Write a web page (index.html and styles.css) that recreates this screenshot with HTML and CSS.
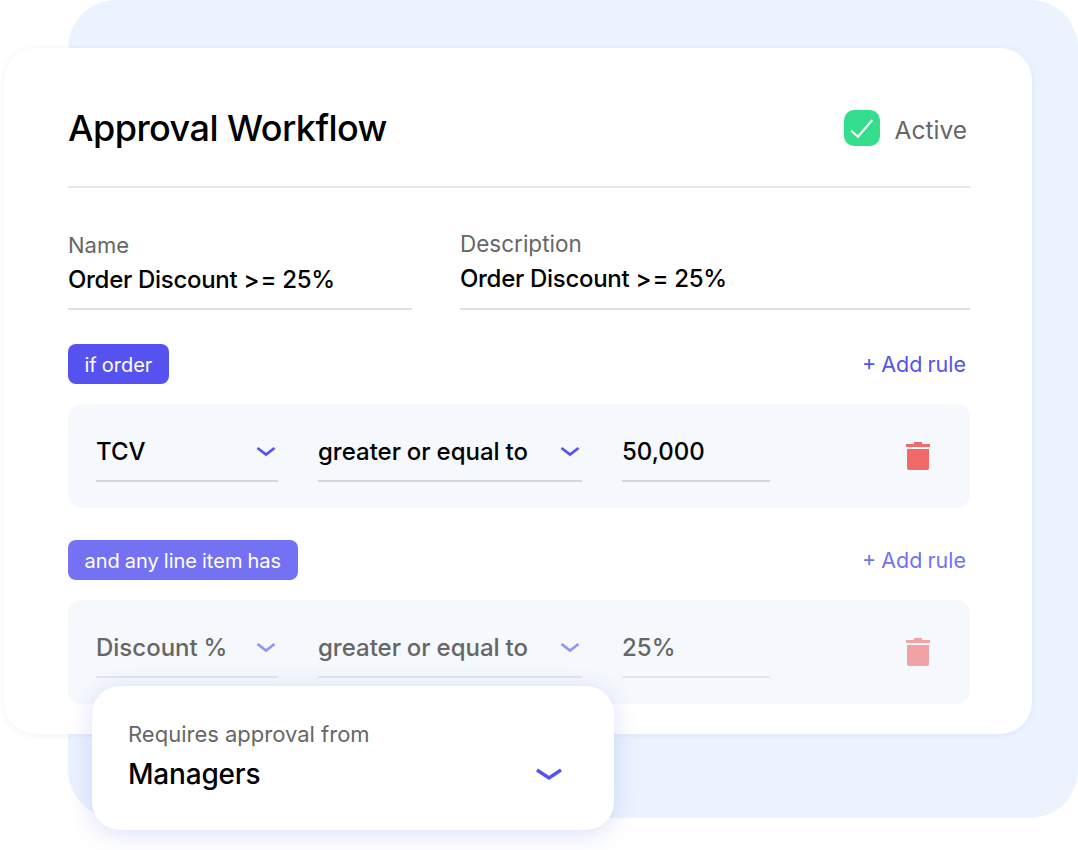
FILE: index.html
```html
<!DOCTYPE html>
<html lang="en">
<head>
<meta charset="utf-8">
<title>Approval Workflow</title>
<link rel="stylesheet" href="styles.css">
</head>
<body>
<div class="scene">
  <div class="backdrop"></div>
  <main class="card">
    <header class="head">
      <h1 class="title">Approval Workflow</h1>
      <div class="status">
        <span class="check"><svg width="36" height="36" viewBox="0 0 36 36"><path d="M7.300 20.700l6.700 6L28.300 10" fill="none" stroke="#fff" stroke-width="2"/></svg></span>
        <span class="status-text">Active</span>
      </div>
    </header>
    <section class="meta">
      <div class="meta-field name"><div class="meta-label">Name</div><div class="meta-value">Order Discount <span class="gte">&gt;</span>= 25%</div></div>
      <div class="meta-field desc"><div class="meta-label">Description</div><div class="meta-value">Order Discount <span class="gte">&gt;</span>= 25%</div></div>
    </section>
    <section class="group">
      <div class="group-head">
        <span class="tag">if order</span>
        <a class="add">+ Add rule</a>
      </div>
      <div class="rule">
        <div class="field f1"><span>TCV</span><svg class="chev" width="20" height="11" viewBox="0 0 20 11"><path d="M1.500 2L10 8.500 18.500 2" fill="none" stroke="#5552f0" stroke-width="2.800"/></svg></div>
        <div class="field f2"><span>greater or equal to</span><svg class="chev" width="20" height="11" viewBox="0 0 20 11"><path d="M1.500 2L10 8.500 18.500 2" fill="none" stroke="#5552f0" stroke-width="2.800"/></svg></div>
        <div class="field f3"><span>50,000</span></div>
        <svg class="trash" width="24" height="28" viewBox="0 0 24 28"><path d="M8 0h8v2h8v3H0V2h8zM1 7h22v19a2 2 0 0 1-2 2H3a2 2 0 0 1-2-2z" fill="#f06a6a"/></svg>
      </div>
    </section>
    <section class="group second">
      <div class="group-head">
        <span class="tag">and any line item has</span>
        <a class="add">+ Add rule</a>
      </div>
      <div class="rule">
        <div class="field f1"><span>Discount %</span><svg class="chev" width="20" height="11" viewBox="0 0 20 11"><path d="M1.500 2L10 8.500 18.500 2" fill="none" stroke="#5552f0" stroke-width="2.800"/></svg></div>
        <div class="field f2"><span>greater or equal to</span><svg class="chev" width="20" height="11" viewBox="0 0 20 11"><path d="M1.500 2L10 8.500 18.500 2" fill="none" stroke="#5552f0" stroke-width="2.800"/></svg></div>
        <div class="field f3"><span>25%</span></div>
        <svg class="trash" width="24" height="28" viewBox="0 0 24 28"><path d="M8 0h8v2h8v3H0V2h8zM1 7h22v19a2 2 0 0 1-2 2H3a2 2 0 0 1-2-2z" fill="#f06a6a"/></svg>
      </div>
    </section>
  </main>
  <aside class="popup">
    <div class="popup-label">Requires approval from</div>
    <div class="popup-row">
      <span class="popup-value">Managers</span>
      <svg width="28" height="14" viewBox="0 0 28 14"><path d="M2 3l12 8 12-8" fill="none" stroke="#5552f0" stroke-width="3.400"/></svg>
    </div>
  </aside>
</div>
</body>
</html>
```
FILE: styles.css
```css
* { box-sizing: border-box; }
html, body { margin: 0; padding: 0; background: #fff; }
body { font-family: Inter, "Noto Sans", sans-serif; color: #000; }
.scene { position: relative; width: 1078px; height: 850px; overflow: hidden; padding: 48px 46px 0 4px; }
.backdrop { position: absolute; left: 68px; top: 0; width: 1010px; height: 818px; background: #ebf3fe; border-radius: 48px; }
.card { position: relative; height: 686px; background: #fff; border-radius: 32px; padding: 0 62px 0 64px; box-shadow: 0 1px 6px rgba(90, 100, 220, 0.09); }
.head { display: flex; justify-content: space-between; align-items: center; height: 140px; padding: 22px 3px 0 0; border-bottom: 2px solid #e6e8ee; }
.title { margin: 0; font-size: 36px; font-weight: 500; letter-spacing: -0.55px; line-height: 44px; }
.status { display: flex; align-items: center; gap: 15px; }
.check { display: block; width: 36px; height: 36px; border-radius: 10px; background: #34de8c; }
.check svg { display: block; }
.status-text { font-size: 24.500px; color: #666; line-height: 30px; padding-top: 4px; }
.meta { display: flex; gap: 48px; margin-top: 44px; }
.meta-field { border-bottom: 2px solid #dfe1ea; height: 78px; }
.name { width: 344px; }
.desc { width: 510px; }
.meta-label { font-size: 22px; line-height: 28px; color: #666; margin-top: -1px; }
.desc .meta-label { margin-top: -2px; font-size: 22.500px; }
.meta-value { font-size: 24px; line-height: 30px; margin-top: 6px; font-weight: 450; letter-spacing: -0.3px; }
.gte { letter-spacing: 1px; }
.group { margin-top: 34px; }
.group.second { margin-top: 32px; }
.second .tag { background: #7472f2; }
.second .add { color: #7472f2; }
.second .field span { color: #666; }
.second .chev { opacity: 0.6; }
.second .trash { opacity: 0.6; }
.second .field { border-bottom-color: #e2e5ec; }
.group-head { display: flex; justify-content: space-between; align-items: center; height: 40px; padding-right: 4px; }
.tag { display: block; background: #5552f0; color: #fff; font-size: 20px; line-height: 42px; height: 40px; padding: 0 16.500px; border-radius: 8px; word-spacing: -0.6px; }
.add { color: #5552f0; font-size: 21.500px; line-height: 28px; word-spacing: -1px; }
.rule { position: relative; display: flex; align-items: flex-start; margin-top: 20px; height: 104px; padding: 28px 0 0 28px; background: #f5f8fc; border-radius: 14px; }
.field { display: flex; justify-content: space-between; align-items: center; height: 50px; padding: 0 2px 10px 0; margin-right: 40px; border-bottom: 2px solid #d3d7e3; font-size: 24px; font-weight: 450; word-spacing: -0.5px; }
.f1 { width: 182px; }
.f2 { width: 264px; }
.f3 { width: 148px; margin-right: 0; }
.chev { display: block; margin-top: 0; }
.trash { display: block; margin: 10px 0 0 136px; }
.popup { position: absolute; left: 92px; top: 686px; width: 522px; height: 144px; padding: 34px 51px 0 36px; background: #fff; border-radius: 28px; box-shadow: 0 4px 24px rgba(80, 100, 220, 0.2); }
.popup-label { font-size: 22px; line-height: 28px; color: #666; }
.popup-row { display: flex; justify-content: space-between; align-items: center; margin-top: 7px; }
.popup-value { font-size: 28px; line-height: 38px; font-weight: 450; letter-spacing: -0.2px; }
```
